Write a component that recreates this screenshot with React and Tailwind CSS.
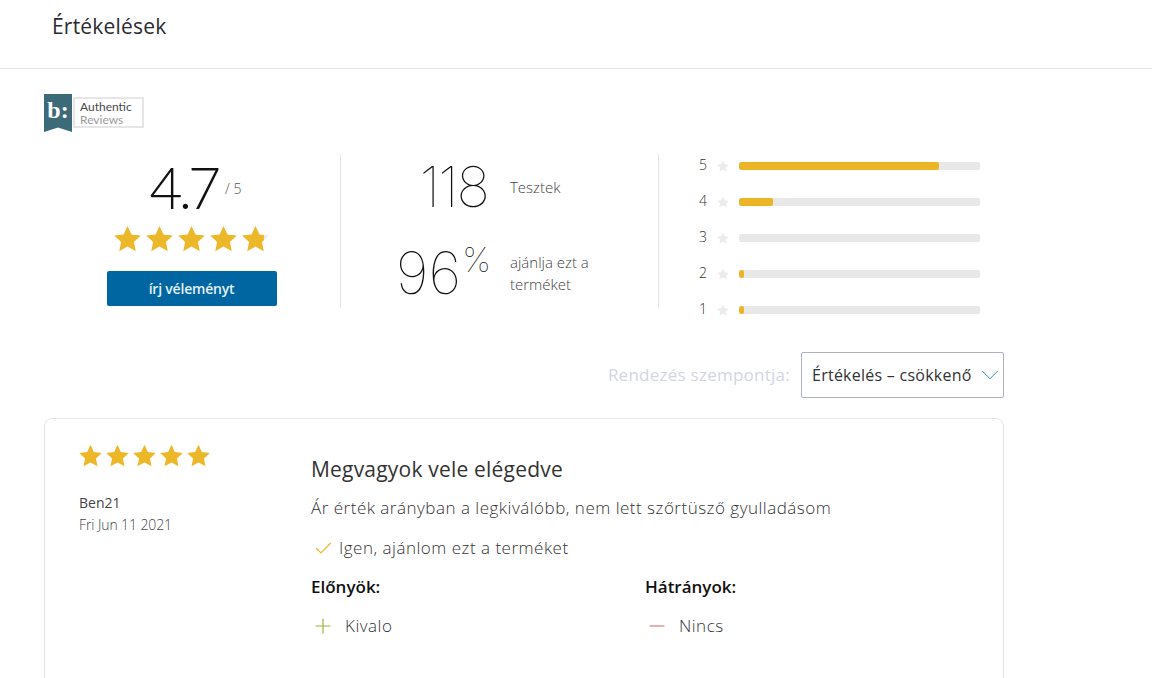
import { Check, ChevronDown, Minus, Plus } from 'lucide-react';

const font = "font-['Open_Sans',sans-serif]";

function Star({ size = 27, color = '#ecb728' }) {
  return (
    <svg width={size} height={size} viewBox="0 0 24 24" className="shrink-0">
      <path
        fill={color}
        d="M12 .8l3.5 7.6 8.3 1-6.1 5.7 1.6 8.2L12 19.2l-7.3 4.1 1.6-8.2L.2 9.4l8.3-1z"
      />
    </svg>
  );
}

function PartStar({ size = 27 }) {
  return (
    <div className="relative" style={{ width: size, height: size }}>
      <Star size={size} color="#ebebeb" />
      <div className="absolute left-0 top-0 h-full w-[80%] overflow-hidden">
        <Star size={size} />
      </div>
    </div>
  );
}

function Logo() {
  return (
    <div className="flex items-start">
      <div className="relative flex h-[38px] w-[28px] items-start justify-center bg-[#3d6a78] pt-[3px] [clip-path:polygon(0_0,100%_0,100%_100%,50%_88%,0_100%)]">
        <span className="font-['Liberation_Serif',serif] text-[24px] font-bold leading-[26px] text-white">b:</span>
      </div>
      <div className="ml-[1px] mt-[3px] flex h-[31px] w-[71px] flex-col justify-center border-2 border-[#e6e6e6] pl-[5px] font-['Lato',sans-serif] text-[12px] leading-[13px]">
        <span className="text-[#4a4a4a]">Authentic</span>
        <span className="text-[#9a9a9a]">Reviews</span>
      </div>
    </div>
  );
}

function Bar({ label, pct }) {
  return (
    <div className="flex h-[20px] shrink-0 items-center">
      <span className="-mt-[2px] w-[18px] text-[14px] font-light leading-[20px] text-[#333]">{label}</span>
      <div className="flex w-[22px] justify-start">
        <Star size={12} color="#ebebeb" />
      </div>
      <div className="h-[8px] w-[241px] overflow-hidden rounded-[2px] bg-[#e8e8e8]">
        <div className="h-full rounded-[2px] bg-[#ecb526]" style={{ width: pct }} />
      </div>
    </div>
  );
}

export default function App() {
  return (
    <div className={`h-[678px] w-full overflow-hidden bg-white ${font}`}>
      <header className="h-[69px] border-b border-[#e6e6e6] pl-[52px] pt-[12px]">
        <h1 className="text-[21px] font-normal leading-[28px] tracking-[0.2px] text-[#2b2b33]">Értékelések</h1>
      </header>

      <main className="w-[1004px] pl-[44px] pt-[25px]">
        <Logo />

        {/* Summary */}
        <section className="mt-[22px] flex h-[154px]">
          <div className="flex w-[297px] flex-col items-center border-r border-[#e6e6e6] pr-[1px]">
            <div className="ml-[8px] flex h-[63px] items-start">
              <span className="font-['Lato',sans-serif] text-[57px] font-light leading-[66px] tracking-[-4px] text-[#111]">4.7</span>
              <span className="ml-[8px] mt-[25px] text-[14px] font-light leading-[20px] text-[#555]">/ 5</span>
            </div>
            <div className="mt-[8px] flex gap-[5px]">
              <Star />
              <Star />
              <Star />
              <Star />
              <PartStar />
            </div>
            <button className="mt-[19px] h-[35px] w-[170px] rounded-[2px] bg-[#0066a1] text-[14px] font-semibold tracking-[-0.2px] text-[#e4f0f8]">
              írj véleményt
            </button>
          </div>

          <div className="flex w-[318px] flex-col border-r border-[#e6e6e6]">
            <div className="flex h-[66px] items-center">
              <span className="w-[147px] text-right font-['Inter',sans-serif] text-[56px] font-thin leading-[66px] tracking-[-2px] text-[#111]">118</span>
              <span className="ml-[22px] text-[15px] font-light text-[#444]">Tesztek</span>
            </div>
            <div className="mt-[23px] flex items-center">
              <div className="flex w-[169px] items-start justify-end pr-[20px] font-['Inter',sans-serif] text-[#111]">
                <span className="text-[58px] font-thin leading-[60px]">96</span>
                <span className="ml-[1px] -mt-[1px] text-[34px] font-thin leading-[36px] tracking-[-1px]">%</span>
              </div>
              <span className="w-[100px] text-[15px] font-light leading-[22px] text-[#444]">ajánlja ezt a terméket</span>
            </div>
          </div>

          <div className="ml-[40px] flex flex-col gap-[16px] pt-[2px]">
            <Bar label="5" pct="83%" />
            <Bar label="4" pct="14%" />
            <Bar label="3" pct="0%" />
            <Bar label="2" pct="2%" />
            <Bar label="1" pct="2%" />
          </div>
        </section>

        {/* Sort */}
        <div className="mt-[44px] flex items-center justify-end">
          <span className="text-[17px] tracking-[0.25px] text-[#d3d5e6]">Rendezés szempontja:</span>
          <div className="ml-[11px] flex h-[46px] w-[203px] items-center justify-between rounded-[2px] border border-[#aeb1c4] pl-[10px] text-[16px] tracking-[0.25px] text-[#333]">
            <span>Értékelés – csökkenő</span>
            <ChevronDown size={30} strokeWidth={0.7} className="-mr-[2px] text-[#0b7fb8]" />
          </div>
        </div>

        {/* Review card */}
        <article className="mt-[20px] flex h-[300px] rounded-[8px] border border-[#e6e6e6] pl-[34px] pt-[25px]">
          <div className="w-[232px]">
            <div className="flex gap-[4px]">
              <Star size={23} />
              <Star size={23} />
              <Star size={23} />
              <Star size={23} />
              <Star size={23} />
            </div>
            <p className="mt-[26px] text-[14px] font-medium leading-[20px] text-[#444]">Ben21</p>
            <p className="mt-[2px] text-[14px] font-light leading-[20px] tracking-[-0.1px] text-[#444]">Fri Jun 11 2021</p>
          </div>

          <div className="flex-1 pt-[11px]">
            <h2 className="text-[21px] font-normal leading-[28px] tracking-[0.2px] text-[#333]">Megvagyok vele elégedve</h2>
            <p className="mt-[13px] text-[17px] font-light leading-[24px] tracking-[0.5px] text-[#333]">
              Ár érték arányban a legkiválóbb, nem lett szőrtüsző gyulladásom
            </p>
            <div className="mt-[16px] flex items-center">
              <Check size={21} strokeWidth={1.4} className="ml-[2px] mr-[5px] text-[#f0b429]" />
              <span className="text-[17px] font-light leading-[24px] tracking-[0.5px] text-[#333]">Igen, ajánlom ezt a terméket</span>
            </div>
            <div className="mt-[15px] flex">
              <div className="w-[334px]">
                <h3 className="text-[17px] font-semibold leading-[24px] text-[#111]">Előnyök:</h3>
                <div className="mt-[15px] flex items-center">
                  <Plus size={24} strokeWidth={1.2} className="mr-[10px] text-[#9bb340]" />
                  <span className="text-[17px] font-light leading-[24px] tracking-[0.5px] text-[#333]">Kivalo</span>
                </div>
              </div>
              <div>
                <h3 className="text-[17px] font-semibold leading-[24px] text-[#111]">Hátrányok:</h3>
                <div className="mt-[15px] flex items-center">
                  <Minus size={24} strokeWidth={1.2} className="mr-[10px] text-[#d9606e]" />
                  <span className="text-[17px] font-light leading-[24px] tracking-[0.5px] text-[#333]">Nincs</span>
                </div>
              </div>
            </div>
          </div>
        </article>
      </main>
    </div>
  );
}
